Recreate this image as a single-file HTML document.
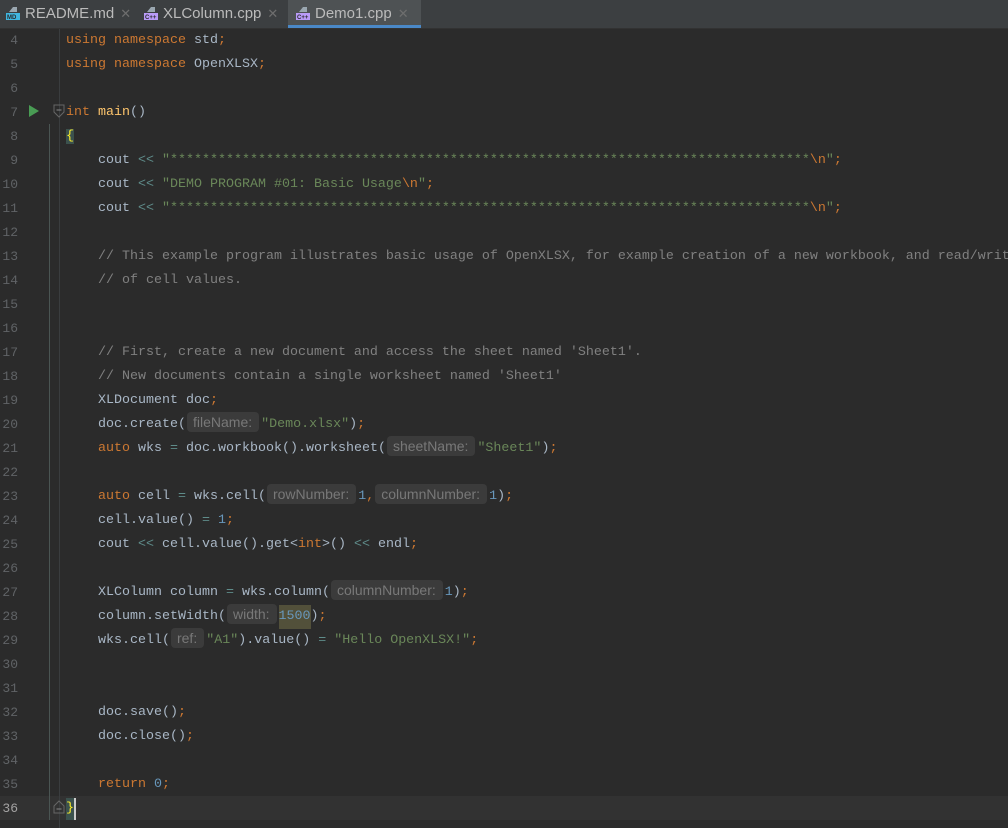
<!DOCTYPE html>
<html><head><meta charset="utf-8"><style>
body{margin:0;width:1008px;height:828px;background:#2b2b2b;overflow:hidden;position:relative;font-family:"Liberation Mono",monospace;}
.tabs{position:absolute;left:0;top:0;width:1008px;height:28px;background:#3c3f41;border-bottom:1px solid #323232;}
.tab{position:absolute;top:0;height:28px;font:15px "Liberation Sans",sans-serif;color:#bbbbbb;line-height:28px;}
.tab .x{color:#6e6e6e;font-size:13px;margin-left:6px}
.tab.act{background:#4e5254;}
.tab.act:after{content:"";position:absolute;left:0;right:0;bottom:0;height:3px;background:#4a88c7}
.ic{display:inline-block;width:14px;height:14px;vertical-align:-2px;margin-right:5px;position:relative}
.line{position:absolute;left:0;width:1008px;height:24px;line-height:26px;font-size:13.33px;white-space:pre;color:#a9b7c6}
.num{position:absolute;left:-1px;width:19px;text-align:right;color:#606366;font-size:13px}
.code{position:absolute;left:66px}
.k{color:#cc7832}.s{color:#6a8759}.n{color:#6897bb}.c{color:#808080}.f{color:#ffc66d}.o{color:#5f8c8a}
.h{display:inline-block;font:14px "Liberation Sans",sans-serif;color:#787878;background:#3b3b3b;border-radius:4px;padding:0 7px 0 6px;margin:0 2px 0 1px;line-height:20px;vertical-align:0px}
</style></head><body>
<div class="tabs">
 <div class="tab" style="left:6px;width:130px"><span class="ic"><svg width="14" height="14"><path d="M7 1 L11 1 L11 6 L3 6Z" fill="#9aa7b0"/><rect x="0" y="7" width="14" height="7" fill="#40b6e0"/><text x="1" y="13" font-size="6" font-family="Liberation Sans" fill="#2b2b2b" font-weight="bold">MD</text></svg></span>README.md<span class="x">✕</span></div>
 <div class="tab" style="left:144px;width:140px"><span class="ic"><svg width="14" height="14"><path d="M7 1 L11 1 L11 6 L3 6Z" fill="#9aa7b0"/><rect x="0" y="7" width="14" height="7" fill="#b99bf8"/><text x="1" y="13" font-size="6" font-family="Liberation Sans" fill="#2b2b2b" font-weight="bold">C++</text></svg></span>XLColumn.cpp<span class="x">✕</span></div>
 <div class="tab act" style="left:288px;width:133px;padding-left:8px;box-sizing:border-box"><span class="ic"><svg width="14" height="14"><path d="M7 1 L11 1 L11 6 L3 6Z" fill="#9aa7b0"/><rect x="0" y="7" width="14" height="7" fill="#b99bf8"/><text x="1" y="13" font-size="6" font-family="Liberation Sans" fill="#2b2b2b" font-weight="bold">C++</text></svg></span>Demo1.cpp<span class="x">✕</span></div>
</div>
<div style="position:absolute;left:0;top:796px;width:1008px;height:24px;background:#323232"></div>
<div style="position:absolute;left:59px;top:29px;width:1px;height:799px;background:#3a3d3f"></div>
<div style="position:absolute;left:49px;top:124px;width:1px;height:696px;background:#4a5553"></div>
<svg style="position:absolute;left:29px;top:105px" width="10" height="12"><path d="M0 0 L10 6 L0 12Z" fill="#499c54"/></svg>
<svg style="position:absolute;left:53px;top:104px" width="12" height="14"><path d="M1 1 H11 V8 L6 13 L1 8Z" fill="none" stroke="#666"/><path d="M3.5 6 H8.5" stroke="#888"/></svg>
<svg style="position:absolute;left:53px;top:800px" width="12" height="14"><path d="M1 13 H11 V6 L6 1 L1 6Z" fill="none" stroke="#666"/><path d="M3.5 9 H8.5" stroke="#888"/></svg>
<div class="line" style="top:28px"><span class="num">4</span><span class="code"><span class="k">using namespace</span> std<span class="k">;</span></span></div>
<div class="line" style="top:52px"><span class="num">5</span><span class="code"><span class="k">using namespace</span> OpenXLSX<span class="k">;</span></span></div>
<div class="line" style="top:76px"><span class="num">6</span></div>
<div class="line" style="top:100px"><span class="num">7</span><span class="code"><span class="k">int</span> <span class="f">main</span>()</span></div>
<div class="line" style="top:124px"><span class="num">8</span><span class="code"><span style="background:#3b514d;color:#ffef28">{</span></span></div>
<div class="line" style="top:148px"><span class="num">9</span><span class="code">    cout <span class="o">&lt;&lt;</span> <span class="s">"********************************************************************************</span><span class="k">\n</span><span class="s">"</span><span class="k">;</span></span></div>
<div class="line" style="top:172px"><span class="num">10</span><span class="code">    cout <span class="o">&lt;&lt;</span> <span class="s">"DEMO PROGRAM #01: Basic Usage</span><span class="k">\n</span><span class="s">"</span><span class="k">;</span></span></div>
<div class="line" style="top:196px"><span class="num">11</span><span class="code">    cout <span class="o">&lt;&lt;</span> <span class="s">"********************************************************************************</span><span class="k">\n</span><span class="s">"</span><span class="k">;</span></span></div>
<div class="line" style="top:220px"><span class="num">12</span></div>
<div class="line" style="top:244px"><span class="num">13</span><span class="code c">    // This example program illustrates basic usage of OpenXLSX, for example creation of a new workbook, and read/write</span></div>
<div class="line" style="top:268px"><span class="num">14</span><span class="code c">    // of cell values.</span></div>
<div class="line" style="top:292px"><span class="num">15</span></div>
<div class="line" style="top:316px"><span class="num">16</span></div>
<div class="line" style="top:340px"><span class="num">17</span><span class="code c">    // First, create a new document and access the sheet named 'Sheet1'.</span></div>
<div class="line" style="top:364px"><span class="num">18</span><span class="code c">    // New documents contain a single worksheet named 'Sheet1'</span></div>
<div class="line" style="top:388px"><span class="num">19</span><span class="code">    XLDocument doc<span class="k">;</span></span></div>
<div class="line" style="top:412px"><span class="num">20</span><span class="code">    doc.create(<span class="h">fileName:</span><span class="s">"Demo.xlsx"</span>)<span class="k">;</span></span></div>
<div class="line" style="top:436px"><span class="num">21</span><span class="code">    <span class="k">auto</span> wks <span class="o">=</span> doc.workbook().worksheet(<span class="h">sheetName:</span><span class="s">"Sheet1"</span>)<span class="k">;</span></span></div>
<div class="line" style="top:460px"><span class="num">22</span></div>
<div class="line" style="top:484px"><span class="num">23</span><span class="code">    <span class="k">auto</span> cell <span class="o">=</span> wks.cell(<span class="h">rowNumber:</span><span class="n">1</span><span class="k">,</span><span class="h">columnNumber:</span><span class="n">1</span>)<span class="k">;</span></span></div>
<div class="line" style="top:508px"><span class="num">24</span><span class="code">    cell.value() <span class="o">=</span> <span class="n">1</span><span class="k">;</span></span></div>
<div class="line" style="top:532px"><span class="num">25</span><span class="code">    cout <span class="o">&lt;&lt;</span> cell.value().get&lt;<span class="k">int</span>&gt;() <span class="o">&lt;&lt;</span> endl<span class="k">;</span></span></div>
<div class="line" style="top:556px"><span class="num">26</span></div>
<div class="line" style="top:580px"><span class="num">27</span><span class="code">    XLColumn column <span class="o">=</span> wks.column(<span class="h">columnNumber:</span><span class="n">1</span>)<span class="k">;</span></span></div>
<div class="line" style="top:604px"><span class="num">28</span><span class="code">    column.setWidth(<span class="h">width:</span><span class="n" style="background:#52503a;display:inline-block;line-height:24px">1500</span>)<span class="k">;</span></span></div>
<div class="line" style="top:628px"><span class="num">29</span><span class="code">    wks.cell(<span class="h">ref:</span><span class="s">"A1"</span>).value() <span class="o">=</span> <span class="s">"Hello OpenXLSX!"</span><span class="k">;</span></span></div>
<div class="line" style="top:652px"><span class="num">30</span></div>
<div class="line" style="top:676px"><span class="num">31</span></div>
<div class="line" style="top:700px"><span class="num">32</span><span class="code">    doc.save()<span class="k">;</span></span></div>
<div class="line" style="top:724px"><span class="num">33</span><span class="code">    doc.close()<span class="k">;</span></span></div>
<div class="line" style="top:748px"><span class="num">34</span></div>
<div class="line" style="top:772px"><span class="num">35</span><span class="code">    <span class="k">return</span> <span class="n">0</span><span class="k">;</span></span></div>
<div class="line" style="top:796px"><span class="num" style="color:#a4a3a3">36</span><span class="code"><span style="background:#3b514d;color:#ffef28;border-right:2px solid #ccc;display:inline-block;line-height:22px">}</span></span></div>
</body></html>
